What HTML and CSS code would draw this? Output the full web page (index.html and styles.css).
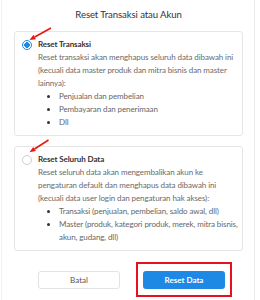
FILE: index.html
```html
<!DOCTYPE html>
<html>
<head>
    <meta charset="utf-8">
    <meta name="viewport" content="width=device-width, initial-scale=1">
    <title>Reset Transaksi atau Akun</title>
    <link rel="stylesheet" href="styles.css">
</head>
<body>

<div class="modal">
    <h1 class="title">Reset Transaksi atau Akun</h1>

    <div class="option">
        <span class="radio checked"></span>
        <div class="option_body">
            <div class="option_title">Reset Transaksi</div>
            <p class="option_desc">Reset transaksi akan menghapus seluruh data dibawah ini (kecuali data master produk dan mitra bisnis dan master lainnya):</p>
            <ul>
                <li>Penjualan dan pembelian</li>
                <li>Pembayaran dan penerimaan</li>
                <li>Dll</li>
            </ul>
        </div>
    </div>

    <div class="option">
        <span class="radio"></span>
        <div class="option_body">
            <div class="option_title">Reset Seluruh Data</div>
            <p class="option_desc">Reset seluruh data akan mengembalikan akun ke pengaturan default dan menghapus data dibawah ini (kecuali data user login dan pengaturan hak akses):</p>
            <ul>
                <li>Transaksi (penjualan, pembelian, saldo awal, dll)</li>
                <li>Master (produk, kategori produk, merek, mitra bisnis, akun, gudang, dll)</li>
            </ul>
        </div>
    </div>

    <div class="actions">
        <button type="button" class="btn_cancel">Batal</button>
        <span class="highlight">
            <button type="button" class="btn_reset">Reset Data</button>
        </span>
    </div>
</div>

<!-- annotation arrows -->
<svg class="arrows" width="260" height="300" viewBox="0 0 260 300">
    <line x1="51" y1="28" x2="34.7" y2="37" stroke="#e8190f" stroke-width="1.6"/>
    <polygon points="29.5,40 35.9,39.2 33.5,34.8" fill="#e8190f"/>
    <line x1="48.5" y1="140" x2="34.5" y2="149" stroke="#e8190f" stroke-width="1.6"/>
    <polygon points="29.5,152.3 35.9,151.1 33.2,146.9" fill="#e8190f"/>
</svg>

</body>
</html>
```

FILE: styles.css
```css
body {
    margin: 0;
    background: #fff;
    font-family: Lato, "Open Sans", sans-serif;
    color: #333;
}

.modal {
    width: 254px;
    height: 300px;
    margin-left: 1px;
    border-left: 1px solid #f0f0f0;
    border-right: 1px solid #ececec;
    padding: 8px 11px 0 12px;
    box-sizing: border-box;
}

.title {
    margin: 0 0 9px 0;
    font-size: 9.6px;
    line-height: 14px;
    font-weight: normal;
    letter-spacing: -0.1px;
    text-align: center;
    color: #333;
}

.option {
    display: flex;
    align-items: flex-start;
    border: 1px solid #e6e6e6;
    border-radius: 3px;
    padding: 6px 3px 6px 7px;
    margin-bottom: 10px;
}

.radio {
    flex: none;
    width: 10px;
    height: 10px;
    margin: 1.5px 6px 0 0;
    border: 1px solid #cfcfcf;
    border-radius: 50%;
    box-sizing: border-box;
    background: #fff;
}
.radio.checked {
    border: 1.5px solid #1e88e5;
    background: radial-gradient(circle, #1e88e5 0 2.6px, #fff 3px);
}

.option_body {
    flex: 1;
    font-size: 8px;
    letter-spacing: -0.1px;
    line-height: 13px;
}

.option_title {
    font-weight: bold;
    color: #333;
}

.option_desc {
    margin: 0;
    color: #6a6a6a;
}

ul {
    margin: 0;
    padding-left: 21px;
    color: #666;
    line-height: 13px;
}
li::marker { color: #333; }

.actions {
    display: flex;
    align-items: center;
    margin-top: 11px;
    padding-left: 24px;
    gap: 16px;
}

.btn_cancel, .btn_reset {
    width: 82px;
    height: 18px;
    font: 8px Lato, "Open Sans", sans-serif;
    border-radius: 3px;
    padding: 0;
}
.btn_cancel {
    background: #fff;
    border: 1px solid #e2e2e2;
    color: #555;
}
.btn_reset {
    background: #1e88e5;
    border: none;
    color: #fff;
    font-weight: bold;
}

.highlight {
    display: block;
    border: 2px solid #e8101a;
    padding: 7px 5px 6px 5px;
}
.highlight .btn_reset { display: block; }

.arrows {
    position: absolute;
    left: 0;
    top: 0;
    pointer-events: none;
}
```
